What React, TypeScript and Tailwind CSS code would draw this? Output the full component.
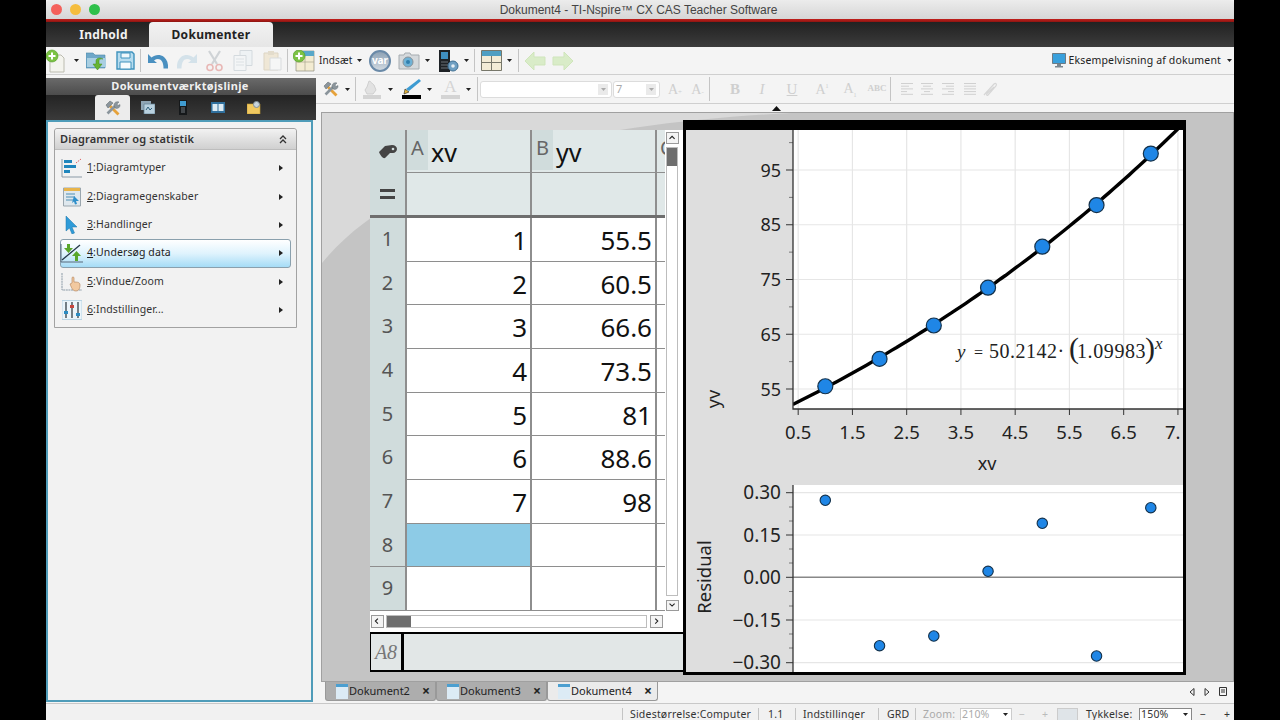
import type { ReactNode } from 'react'

const Arrow = ({ className = '' }: { className?: string }) => (
  <div className={`w-[5px] h-[3px] shrink-0 ${className}`}>
    <svg width="5" height="3" viewBox="0 0 5 3" className="block"><path d="M0 0h5L2.5 3z" fill="#222" /></svg>
  </div>
)
const Sep = ({ className = '' }: { className?: string }) => (
  <div className={`w-px self-stretch my-[2px] bg-[#c4c4c4] shrink-0 ${className}`} />
)

type IconProps = { className?: string }
const Plus = ({ x, y }: { x: number; y: number }) => (
  <g>
    <circle cx={x} cy={y} r="6" fill="#7cc243" stroke="#4f9a25" strokeWidth=".6" />
    <path d={`M${x - 3.5} ${y}h7M${x} ${y - 3.5}v7`} stroke="#fff" strokeWidth="2" />
  </g>
)

const NewDoc = ({ className }: IconProps) => (
  <svg width="20" height="24" viewBox="0 0 20 24" className={className}>
    <path d="M4 6h11l3 3v14H4z" fill="#f4f4ee" stroke="#bcbcb0" />
    <Plus x={6} y={7} />
  </svg>
)
const OpenIc = ({ className }: IconProps) => (
  <svg width="21" height="22" viewBox="0 0 21 22" className={className}>
    <path d="M0 3h7l2 2h10v13H0z" fill="#6fa8c9" stroke="#4b86a8" strokeWidth=".6" />
    <path d="M1 8h19v9H1z" fill="#a9cfe2" />
    <path d="M7 14h3v-3c0-3 4-4 7-2-3-.5-4 .5-4 2v3h3l-4.5 6z" fill="#67b432" stroke="#468b1b" strokeWidth=".5" />
  </svg>
)
const SaveIc = ({ className }: IconProps) => (
  <svg width="19" height="19" viewBox="0 0 19 19" className={className}>
    <path d="M1 1h15l2 2v15H1z" fill="#b7dcef" stroke="#3f92bd" strokeWidth="1.4" />
    <path d="M5 2h9v5H5z" fill="#eef7fb" stroke="#3f92bd" />
    <path d="M4 11h11v7H4z" fill="#f6fbfd" stroke="#3f92bd" />
  </svg>
)
const UndoIc = ({ className, color = '#4a90c0', flip = false }: IconProps & { color?: string; flip?: boolean }) => (
  <svg width="22" height="16" viewBox="0 0 22 16" className={className}>
    <g transform={flip ? 'translate(22 0) scale(-1 1)' : undefined}>
      <path d="M1 1v9h9L7 7.5c3-2 6-2 8 1 1 1.5 1.5 4 1.5 7H21c.5-5-1-9-4-11.5C13 1 8 1.5 4.5 4.5z" fill={color} />
    </g>
  </svg>
)
const CutIc = ({ className }: IconProps) => (
  <svg width="17" height="22" viewBox="0 0 17 22" className={className}>
    <path d="M3 1l8 13M14 1L6 14" stroke="#cfd3d6" strokeWidth="2.2" fill="none" />
    <circle cx="4" cy="17.5" r="3" fill="none" stroke="#e8b7b5" strokeWidth="1.6" />
    <circle cx="13" cy="17.5" r="3" fill="none" stroke="#e8b7b5" strokeWidth="1.6" />
  </svg>
)
const CopyIc = ({ className }: IconProps) => (
  <svg width="20" height="21" viewBox="0 0 20 21" className={className}>
    <path d="M7 .5h12v15H7z" fill="#eef2f4" stroke="#d4dade" />
    <path d="M1 5.5h12v15H1z" fill="#f3f5f6" stroke="#d4dade" />
    <path d="M3 9h8M3 12h8M3 15h8" stroke="#dce1e4" />
  </svg>
)
const PasteIc = ({ className }: IconProps) => (
  <svg width="19" height="21" viewBox="0 0 19 21" className={className}>
    <path d="M1 3h14v17H1z" fill="#efe7d6" stroke="#ddd5c4" />
    <path d="M5 1h6v4H5z" fill="#e3dccc" />
    <path d="M7 8h11v12H7z" fill="#f5f6f6" stroke="#d9dcde" />
  </svg>
)
const InsertIc = ({ className }: IconProps) => (
  <svg width="22" height="22" viewBox="0 0 22 22" className={className}>
    <path d="M3 1h18v20H3z" fill="#f3ecd2" stroke="#8d8d80" strokeWidth=".7" />
    <path d="M3 1h18v5H3z" fill="#58a8c9" />
    <path d="M3 12h18M12 6v15" stroke="#aaa690" strokeWidth=".7" />
    <Plus x={6} y={6} />
  </svg>
)
const VarIc = ({ className }: IconProps) => (
  <div className={`w-[22px] h-[22px] rounded-full border-2 border-[#6a8aa8] bg-linear-to-b from-[#8fa3b6] to-[#cfd8e0] flex items-center justify-center text-white text-[10px] font-bold ${className}`}>var</div>
)
const CameraIc = ({ className }: IconProps) => (
  <svg width="22" height="18" viewBox="0 0 22 18" className={className}>
    <path d="M1 3h5l1-2h5l1 2h8v14H1z" fill="#d5d9dc" stroke="#a6acb0" />
    <circle cx="10" cy="10" r="5" fill="#6fb2d6" stroke="#8a9298" />
    <circle cx="10" cy="10" r="2" fill="#2f7fae" />
  </svg>
)
const DeviceIc = ({ className }: IconProps) => (
  <svg width="21" height="22" viewBox="0 0 21 22" className={className}>
    <path d="M1 0h11v22H1z" fill="#1e2226" />
    <path d="M3 2h7v7H3z" fill="#3f8fc0" />
    <path d="M3 12h7M3 15h7M3 18h7" stroke="#6a7076" />
    <circle cx="15" cy="16" r="5" fill="#6f9fc2" stroke="#3f6f92" />
    <circle cx="15" cy="16" r="1.8" fill="#e5eef4" />
  </svg>
)
const LayoutIc = ({ className }: IconProps) => (
  <svg width="21" height="21" viewBox="0 0 21 21" className={className}>
    <path d="M.5.5h20v20H.5z" fill="#f3ecd6" stroke="#77776a" />
    <path d="M1 1h19v5H1z" fill="#4f9fc2" />
    <path d="M1 12.5h19M10.5 6v14" stroke="#77776a" />
  </svg>
)
const NavIc = ({ className, flip = false }: IconProps & { flip?: boolean }) => (
  <svg width="22" height="20" viewBox="0 0 22 20" className={className}>
    <path d={flip ? 'M12 1l9 9-9 9v-5H1V6h11z' : 'M10 1L1 10l9 9v-5h11V6H10z'} fill="#d9ecc8" stroke="#cfe5bb" />
  </svg>
)
const Monitor = ({ className }: IconProps) => (
  <svg width="14" height="15" viewBox="0 0 14 15" className={className}>
    <path d="M.5.5h13v10H.5z" fill="#39a0dc" stroke="#6b7b86" />
    <path d="M5 11h4v2h2v1.5H3V13h2z" fill="#7b868e" />
  </svg>
)
const Tools = ({ className }: IconProps) => (
  <svg width="16" height="16" viewBox="0 0 16 16" className={className}>
    <path d="M13.5 14.5L5 6" stroke="#e6a23a" strokeWidth="2.8" />
    <path d="M1 5l4-4 3 2-5 5z" fill="#8b959c" stroke="#596268" strokeWidth=".5" />
    <path d="M2.5 13.5L10 6" stroke="#8b959c" strokeWidth="2.6" />
    <path d="M9 5c0-2.5 2.5-4 5-3l-2 2 1 1.5 2-1c.5 2.5-2 5-5 3.5z" fill="#8b959c" stroke="#596268" strokeWidth=".4" />
  </svg>
)
const Fill = ({ className }: IconProps) => (
  <svg width="20" height="20" viewBox="0 0 20 20" className={className}>
    <path d="M7 2c2 0 3 3 5 4l2 5-3 4H5l-2-4 2-3z" fill="#e2e2e2" stroke="#cfcfcf" />
    <path d="M1 16h18v4H1z" fill="#d4d4d4" />
  </svg>
)
const Pen = ({ className }: IconProps) => (
  <svg width="19" height="20" viewBox="0 0 19 20" className={className}>
    <path d="M17 0l2 2L7 12l-3-2z" fill="#3d9bd2" />
    <path d="M3 10l4 3-5 2z" fill="#e3b53a" stroke="#222" strokeWidth=".6" />
    <path d="M0 16h19v4H0z" fill="#000" />
  </svg>
)
const TextA = ({ className }: IconProps) => (
  <div className={`w-[19px] h-[20px] flex flex-col items-center font-['Liberation_Serif',serif] text-[#d4d4d4] text-[17px] leading-[16px] ${className}`}>
    A<div className="w-full h-[4px] bg-[#d4d4d4]" />
  </div>
)
const Align = ({ kind, className }: IconProps & { kind: 'l' | 'c' | 'r' | 'j' }) => {
  const rows = [12, 8, 12, 6, 12]
  return (
    <svg width="16" height="14" viewBox="0 0 16 14" className={className}>
      {rows.map((w, i) => {
        const len = kind === 'j' ? 12 : w
        const x = kind === 'l' || kind === 'j' ? 2 : kind === 'r' ? 14 - len : 8 - len / 2
        return <path key={i} d={`M${x} ${1.5 + i * 2.7}h${len}`} stroke="#d0d0d0" />
      })}
    </svg>
  )
}
const Clip = ({ className }: IconProps) => (
  <svg width="16" height="15" viewBox="0 0 16 15" className={className}>
    <path d="M2 13L12 2c2-1.5 3 .5 2 2L6 13c-1 1-2 0-1-1.5L12 5" fill="none" stroke="#d6d6d6" strokeWidth="1.2" />
  </svg>
)
const DocTabIc = () => (
  <svg width="12" height="15" viewBox="0 0 12 15" className="shrink-0">
    <path d="M0 0h12v15H0z" fill="#dcebf5" />
    <path d="M0 0h12v3H0z" fill="#4c9fd0" />
  </svg>
)

const Pages = () => (
  <svg width="14" height="13" viewBox="0 0 14 13">
    <path d="M0 0h10v9H0z" fill="#8fa5b4" />
    <path d="M3 3h11v10H3z" fill="#b9d1df" stroke="#5f7f92" strokeWidth=".7" />
    <path d="M5 9l2-3 2 3 2-2" fill="none" stroke="#2f5f7a" />
  </svg>
)
const Handheld = () => (
  <svg width="8" height="15" viewBox="0 0 8 15">
    <path d="M0 0h8v15H0z" fill="#15181a" />
    <path d="M1 1h6v5H1z" fill="#3f9bd0" />
    <path d="M2 8h4M2 10h4M2 12h4" stroke="#70777c" />
  </svg>
)
const Book = () => (
  <svg width="14" height="11" viewBox="0 0 14 11">
    <path d="M0 0h14v11H0z" fill="#2f6f9c" />
    <path d="M1.5 2h5v7h-5zM7.5 2h5v7h-5z" fill="#dcebf3" />
  </svg>
)
const Folder = () => (
  <svg width="14" height="13" viewBox="0 0 14 13">
    <path d="M0 3h13v10H0z" fill="#f0c860" stroke="#c49a30" strokeWidth=".6" />
    <circle cx="9.5" cy="3.5" r="3" fill="#c8d4dc" stroke="#7f8e98" />
  </svg>
)

const MenuBars = () => (
  <svg width="22" height="20" viewBox="0 0 22 20">
    <path d="M1 1v18h20" fill="none" stroke="#8b9aa6" />
    <path d="M3 2h8v3H3zM3 7h12v3H3zM3 12h6v3H3z" fill="#1f86bd" />
    <path d="M15 5l5-4" stroke="#e06060" strokeDasharray="1.5 1" />
  </svg>
)
const MenuProps = () => (
  <svg width="18" height="20" viewBox="0 0 18 20">
    <path d="M.5 1h17v18H.5z" fill="#dfe8ee" stroke="#9aa6ae" />
    <path d="M1 1h16v3H1z" fill="#e8b44a" />
    <path d="M3 7h9M3 10h9M3 13h9" stroke="#4f8fb3" />
    <path d="M11 9l5 5h-3l1 3-2 .5-1-3-2 1.5z" fill="#2f8fca" />
  </svg>
)
const MenuCursor = () => (
  <svg width="13" height="18" viewBox="0 0 13 18">
    <path d="M1 0l11 11H7l2.5 6-2.5 1-2.5-6L1 15z" fill="#2f9bd8" stroke="#1d76a8" strokeWidth=".5" />
  </svg>
)
const MenuExplore = () => (
  <svg width="24" height="20" viewBox="0 0 24 20">
    <path d="M1 1v18h22" fill="none" stroke="#56687a" />
    <path d="M2 17L20 2" stroke="#26384a" strokeWidth="1.3" />
    <path d="M7 1v4H4l4.5 5L13 5h-3V1z" fill="#5aa72b" />
    <path d="M18 18v-5h3l-4.5-5-4.5 5h3v5z" fill="#5aa72b" />
  </svg>
)
const MenuWindow = () => (
  <svg width="22" height="20" viewBox="0 0 22 20">
    <path d="M1 1v17h20" fill="none" stroke="#8b9aa6" strokeDasharray="2 .6" />
    <path d="M9 12l2-1V6c0-1.5 2-1.5 2 0v4c3 0 6 0 6 3 0 3-1 6-4 6-3 0-4-2-6-7z" fill="#f2c9a0" stroke="#b08057" strokeWidth=".6" />
  </svg>
)
const MenuSettings = () => (
  <svg width="20" height="20" viewBox="0 0 20 20">
    <path d="M0 .5h20v19H0z" fill="#eaf4fa" stroke="#b9d4e4" />
    <path d="M4 2v16M10 2v16M16 2v16" stroke="#232f38" strokeWidth="1.2" />
    <path d="M2 11h4v3H2zM14 13h4v3h-4z" fill="#2a8bc2" />
    <path d="M8 5h4v3H8z" fill="#c6453d" />
  </svg>
)

const MENU: { num: string; label: string; icon: ReactNode }[] = [
  { num: '1', label: ':Diagramtyper', icon: <MenuBars /> },
  { num: '2', label: ':Diagramegenskaber', icon: <MenuProps /> },
  { num: '3', label: ':Handlinger', icon: <MenuCursor /> },
  { num: '4', label: ':Undersøg data', icon: <MenuExplore /> },
  { num: '5', label: ':Vindue/Zoom', icon: <MenuWindow /> },
  { num: '6', label: ':Indstillinger...', icon: <MenuSettings /> },
]

const Sidebar = () => (
  <div className="w-[270px] shrink-0 flex flex-col pt-[3px] bg-[#f4f4f4]">
    <div className="h-[17px] bg-linear-to-b from-[#6a6a6a] to-[#4c4c4c] text-[#f0f0f0] text-[11px] font-bold tracking-[.35px] flex items-center justify-center pr-[2px]">Dokumentværktøjslinje</div>
    <div className="h-[25px] bg-linear-to-b from-[#242424] to-[#3a3a3a] flex items-end pl-[49px]">
      <div className="w-[35px] h-[25px] bg-[#ececec] rounded-t-[3px] flex items-center justify-center"><Tools /></div>
      <div className="w-[36px] h-[25px] flex items-center justify-center"><Pages /></div>
      <div className="w-[34px] h-[25px] flex items-center justify-center"><Handheld /></div>
      <div className="w-[36px] h-[25px] flex items-center justify-center"><Book /></div>
      <div className="w-[36px] h-[25px] flex items-center justify-center"><Folder /></div>
    </div>
    <div className="h-[582px] w-[267px] border-2 border-[#4f9cb9] bg-[#f2f2f2] pt-[6px] pl-[6px]">
      <div className="w-[243px] h-[200px] border border-[#a2a2a2] rounded-t-[3px] flex flex-col">
        <div className="h-[21px] shrink-0 bg-linear-to-b from-[#f2f2f2] to-[#d0d0d0] border-b border-[#bdbdbd] rounded-t-[3px] flex items-center justify-between pl-[5px] pr-[9px]">
          <span className="text-[11px] font-semibold tracking-[.15px] text-[#333]">Diagrammer og statistik</span>
          <svg width="8" height="9" viewBox="0 0 8 9"><path d="M1 4l3-3 3 3M1 8l3-3 3 3" fill="none" stroke="#333" strokeWidth="1.3" /></svg>
        </div>
        <div className="pt-[4px] px-[5px] flex flex-col">
          {MENU.map(m => (
            <div
              key={m.num}
              className={m.num === '4'
                ? 'h-[28.4px] flex items-center rounded-[3px] border border-[#8aa0ad] bg-linear-to-b from-[#ffffff] via-[#dff3fd] to-[#a5dcf6] text-[#222]'
                : 'h-[28.4px] flex items-center border border-transparent text-[#333]'}
            >
              <div className="w-[25px] flex justify-center shrink-0 ml-[-2px]">{m.icon}</div>
              <span className="ml-[3px] text-[10.5px] tracking-[.1px]"><span className="underline">{m.num}</span>{m.label}</span>
              <svg width="4" height="6" viewBox="0 0 4 6" className="ml-auto mr-[7px]"><path d="M0 0l4 3-4 3z" fill="#222" /></svg>
            </div>
          ))}
        </div>
      </div>
    </div>
  </div>
)

const Toolbar = () => (
  <div className="h-[28px] bg-[#f4f4f4] border-b border-[#cfcfcf] flex items-center shrink-0">
    <NewDoc className="shrink-0" />
    <Arrow className="ml-[8px]" />
    <OpenIc className="ml-[7px] shrink-0" />
    <SaveIc className="ml-[9px] shrink-0" />
    <Sep className="ml-[5px]" />
    <UndoIc className="ml-[6px] shrink-0" />
    <UndoIc className="ml-[7px] shrink-0" color="#d4e2ea" flip />
    <CutIc className="ml-[8px] shrink-0" />
    <CopyIc className="ml-[10px] shrink-0" />
    <PasteIc className="ml-[10px] shrink-0" />
    <Sep className="ml-[5px]" />
    <InsertIc className="ml-[5px] shrink-0" />
    <span className="ml-[4px] w-[33px] text-[10px] tracking-[.1px] text-[#222]">Indsæt</span>
    <Arrow className="ml-[5px]" />
    <VarIc className="ml-[7px] shrink-0" />
    <CameraIc className="ml-[7px] shrink-0" />
    <Arrow className="ml-[5px]" />
    <DeviceIc className="ml-[8px] shrink-0" />
    <Arrow className="ml-[5px]" />
    <Sep className="ml-[5px]" />
    <LayoutIc className="ml-[6px] shrink-0" />
    <Arrow className="ml-[5px]" />
    <Sep className="ml-[6px]" />
    <NavIc className="ml-[5px] shrink-0" />
    <NavIc className="ml-[6px] shrink-0" flip />
    <Monitor className="ml-auto shrink-0" />
    <span className="ml-[3px] text-[10.5px] tracking-[.15px] text-[#222]">Eksempelvisning af dokument</span>
    <Arrow className="ml-[6px] mr-[2px]" />
  </div>
)

const FormatLabel = ({ w, ml, className = '', children }: { w: string; ml: string; className?: string; children: ReactNode }) => (
  <div className={`${w} ${ml} ${className} shrink-0 text-center font-['Liberation_Serif',serif] text-[#cfcfcf]`}>{children}</div>
)

const FormatBar = () => (
  <div className="h-[29px] bg-[#f4f4f4] border-b border-[#cfcfcf] flex items-center shrink-0">
    <Tools className="ml-[7px] shrink-0" />
    <Arrow className="ml-[6px]" />
    <Sep className="ml-[5px]" />
    <Fill className="ml-[6px] shrink-0" />
    <Arrow className="ml-[6px]" />
    <Pen className="ml-[9px] shrink-0" />
    <Arrow className="ml-[6px]" />
    <TextA className="ml-[9px] shrink-0" />
    <Arrow className="ml-[6px]" />
    <Sep className="ml-[6px]" />
    <div className="ml-[2px] w-[132px] h-[17px] bg-white border border-[#dcdcdc] rounded-[3px] flex items-center justify-end pr-[3px] shrink-0">
      <div className="w-[10px] h-[11px] bg-[#eaeaea] flex items-center justify-center"><svg width="5" height="3" viewBox="0 0 5 3"><path d="M0 0h5L2.5 3z" fill="#aaa" /></svg></div>
    </div>
    <div className="ml-[1px] w-[47px] h-[17px] bg-white border border-[#dcdcdc] rounded-[3px] flex items-center justify-between pl-[2px] pr-[3px] shrink-0">
      <span className="text-[11px] text-[#aaa]">7</span>
      <div className="w-[10px] h-[11px] bg-[#eaeaea] flex items-center justify-center"><svg width="5" height="3" viewBox="0 0 5 3"><path d="M0 0h5L2.5 3z" fill="#aaa" /></svg></div>
    </div>
    <FormatLabel w="w-[16px]" ml="ml-[7px]" className="text-[14px]">A<span className="text-[7px]">+</span></FormatLabel>
    <FormatLabel w="w-[15px]" ml="ml-[7px]" className="text-[14px]">A<span className="text-[7px]">-</span></FormatLabel>
    <Sep className="ml-[4px]" />
    <FormatLabel w="w-[20px]" ml="ml-[15px]" className="text-[15px] font-bold">B</FormatLabel>
    <FormatLabel w="w-[20px]" ml="ml-[7px]" className="text-[15px] italic">I</FormatLabel>
    <FormatLabel w="w-[20px]" ml="ml-[10px]" className="text-[15px] underline">U</FormatLabel>
    <FormatLabel w="w-[20px]" ml="ml-[10px]" className="text-[14px]">A<span className="text-[6px] align-super">1</span></FormatLabel>
    <FormatLabel w="w-[20px]" ml="ml-[8px]" className="text-[14px]">A<span className="text-[6px] align-sub">1</span></FormatLabel>
    <FormatLabel w="w-[24px]" ml="ml-[5px]" className="text-[9px] font-bold">ABC</FormatLabel>
    <Sep className="ml-[1px]" />
    <Align kind="l" className="ml-[8px] shrink-0" />
    <Align kind="c" className="ml-[4px] shrink-0" />
    <Align kind="r" className="ml-[5px] shrink-0" />
    <Align kind="j" className="ml-[6px] shrink-0" />
    <Clip className="ml-[4px] shrink-0" />
  </div>
)

const CELLS: [string, string, string][] = [
  ['1', '1', '55.5'],
  ['2', '2', '60.5'],
  ['3', '3', '66.6'],
  ['4', '4', '73.5'],
  ['5', '5', '81'],
  ['6', '6', '88.6'],
  ['7', '7', '98'],
  ['8', '', ''],
  ['9', '', ''],
]

const Chevron = ({ d }: { d: string }) => (
  <svg width="11" height="11" viewBox="0 0 13 13" className="block"><path d={d} fill="none" stroke="#222" strokeWidth="1.3" /></svg>
)

const Spreadsheet = () => (
  <div className="w-[313px] h-[542px] mt-[10px] shrink-0 flex flex-col bg-white">
    <div className="flex h-[481px] shrink-0">
      <div className="w-[295px] shrink-0 flex flex-col">
        <div className="grid grid-cols-[37px_125px_125px_8px] h-[43px] border-b border-[#8e8e8e] bg-[#e0e8e8]">
          <div className="bg-[#d0dcdc] border-r-2 border-[#8e8e8e] flex items-center justify-center">
            <svg width="20" height="16" viewBox="0 0 20 16"><path d="M1 8l6-6 7-1c3 0 5 2 5 4s-2 4-4 4l-3 0-5 5c-2 1-5-3-6-6z" fill="#444" /><circle cx="15" cy="5" r="1.3" fill="#d0dcdc" /></svg>
          </div>
          <div className="border-r-2 border-[#8e8e8e] flex">
            <div className="w-[21px] h-[40px] bg-[#d0dcdc] text-center text-[20px] leading-[36px] text-[#666]">A</div>
            <div className="ml-[3px] text-[25px] leading-[44px] text-[#111]">xv</div>
          </div>
          <div className="border-r-2 border-[#8e8e8e] flex">
            <div className="w-[21px] h-[40px] bg-[#d0dcdc] text-center text-[20px] leading-[36px] text-[#666]">B</div>
            <div className="ml-[3px] text-[25px] leading-[44px] text-[#111]">yv</div>
          </div>
          <div className="text-[20px] leading-[36px] text-[#666] overflow-hidden pl-[3px]">C</div>
        </div>
        <div className="grid grid-cols-[37px_125px_125px_8px] h-[45px] border-b-[3px] border-[#6e6e6e] bg-[#e0e8e8]">
          <div className="bg-[#d0dcdc] border-r-2 border-[#8e8e8e] flex items-center justify-center">
            <svg width="15" height="10" viewBox="0 0 15 10"><path d="M0 0h15v3H0zM0 7h15v3H0z" fill="#444" /></svg>
          </div>
          <div className="border-r-2 border-[#8e8e8e]" />
          <div className="border-r-2 border-[#8e8e8e]" />
          <div />
        </div>
        {CELLS.map(([row, a, b]) => (
          <div key={row} className="grid grid-cols-[37px_125px_125px_8px] h-[43.67px] border-b border-[#8e8e8e]">
            <div className="bg-[#d0dcdc] border-r-2 border-[#8e8e8e] text-center text-[20px] leading-[41px] text-[#555]">{row}</div>
            <div className={`border-r-2 border-[#8e8e8e] text-right pr-[3px] text-[26px] leading-[44px] text-[#111] ${row === '8' ? 'bg-[#8dcbe6]' : ''}`}>{a}</div>
            <div className="border-r-2 border-[#8e8e8e] text-right pr-[3px] text-[26px] leading-[44px] text-[#111]">{b}</div>
            <div />
          </div>
        ))}
      </div>
      <div className="w-[18px] shrink-0 pt-[2px] pl-[1px] flex flex-col">
        <div className="w-[13px] h-[12px] border border-[#9a9a9a] bg-[#f4f4f4]"><Chevron d="M3 7l3-3 3 3" /></div>
        <div className="w-[12px] h-[450px] mt-[3px] border border-[#bdbdbd] bg-white">
          <div className="h-[18px] bg-[#6e6e6e]" />
        </div>
        <div className="w-[13px] h-[11px] mt-[4px] border border-[#9a9a9a] bg-[#f4f4f4]"><Chevron d="M3 3l3 3 3-3" /></div>
      </div>
    </div>
    <div className="h-[21px] shrink-0 flex items-center pl-[1px] bg-white">
      <div className="w-[13px] h-[13px] border border-[#9a9a9a] bg-[#f4f4f4] shrink-0"><Chevron d="M7 3L4 6l3 3" /></div>
      <div className="w-[261px] h-[13px] ml-[2px] border border-[#bdbdbd] shrink-0"><div className="w-[24px] h-full bg-[#6e6e6e]" /></div>
      <div className="w-[13px] h-[13px] ml-[3px] border border-[#9a9a9a] bg-[#f4f4f4] shrink-0"><Chevron d="M5 3l3 3-3 3" /></div>
    </div>
    <div className="h-[40px] shrink-0 flex border-y-2 border-l border-black bg-[#e2e7e7]">
      <div className="w-[30px] flex items-center justify-center font-['Liberation_Serif',serif] italic text-[20px] text-[#777]">A8</div>
      <div className="w-[3px] bg-black" />
    </div>
  </div>
)

const xp = (v: number) => 825.3 + 54.25 * (v - 1)
const yp = (v: number) => 389 - (v - 55) * 5.475
const DATA = [55.5, 60.5, 66.6, 73.5, 81, 88.6, 98]
const RES = [500.3, 645.7, 636, 571.3, 523.3, 656, 507.7]
const fit = (x: number) => 50.2142 * Math.pow(1.09983, x)
const curve = Array.from({ length: 80 }, (_, i) => {
  const x = 0.4 + (i / 79) * 7.2
  return `${i ? 'L' : 'M'}${xp(x).toFixed(1)} ${yp(fit(x)).toFixed(1)}`
}).join(' ')

const XT = [0.5, 1.5, 2.5, 3.5, 4.5, 5.5, 6.5, 7.5]
const YT = [55, 65, 75, 85, 95]
const RT: [string, number][] = [['0.30', 492.7], ['0.15', 535], ['0.00', 577.3], ['−0.15', 620], ['−0.30', 662.7]]

// one drawing for both plots, in page coordinates
const Plots = () => (
  <div className="w-[503px] h-[555px] shrink-0 border-t-[10px] border-x-[3px] border-b-[3px] border-black bg-[#dedede]">
    <svg width="497" height="542" viewBox="686 130 497 542" className="block overflow-visible" fontFamily="'Noto Sans', sans-serif" fill="#222">
      <rect x="793" y="130" width="390" height="279" fill="#fff" />
      {XT.map(v => <path key={v} d={`M${xp(v)} 130V409`} stroke="#e6e6e6" strokeWidth="1.2" />)}
      {YT.map(v => <path key={v} d={`M793 ${yp(v)}H1183`} stroke="#e6e6e6" strokeWidth="1.2" />)}
      {YT.map(v => <path key={v} d={`M786 ${yp(v)}H793`} stroke="#333" />)}
      {[60, 70, 80, 90, 100].map(v => <path key={v} d={`M789 ${yp(v)}H793`} stroke="#777" />)}
      {XT.map(v => <path key={v} d={`M${xp(v)} 409V415`} stroke="#333" />)}
      <clipPath id="plotClip"><rect x="793" y="130" width="390" height="279" /></clipPath>
      <path d={curve} fill="none" stroke="#000" strokeWidth="3.4" clipPath="url(#plotClip)" />
      <path d="M793 130V409H1183" fill="none" stroke="#333" strokeWidth="1.3" />
      {DATA.map((v, i) => <circle key={i} cx={xp(i + 1)} cy={yp(v)} r="7.5" fill="#1f86e6" stroke="#14314a" strokeWidth="1.2" />)}
      {YT.map(v => <text key={v} x="781" y={yp(v) + 6.5} fontSize="18" textAnchor="end">{v}</text>)}
      {XT.slice(0, 7).map(v => <text key={v} x={xp(v)} y="439" fontSize="18.5" textAnchor="middle">{v.toFixed(1)}</text>)}
      <text x="1165" y="439" fontSize="18.5">7.</text>
      <text x="987" y="470" fontSize="18" textAnchor="middle">xv</text>
      <text transform="translate(720 399) rotate(-90)" fontSize="18" textAnchor="middle">yv</text>
      <g fontFamily="'Liberation Serif', serif" fill="#222">
        <text x="957" y="358" fontSize="19" fontStyle="italic">y</text>
        <text x="974" y="358" fontSize="16">=</text>
        <text x="989" y="358" fontSize="20" letterSpacing=".5">50.2142·</text>
        <text x="1069" y="358" fontSize="30" fontWeight="200">(</text>
        <text x="1077" y="358" fontSize="20" letterSpacing=".6">1.09983</text>
        <text x="1145" y="358" fontSize="30" fontWeight="200">)</text>
        <text x="1155" y="349" fontSize="17" fontStyle="italic">x</text>
      </g>

      <rect x="793" y="485" width="390" height="187" fill="#fff" />
      {RT.map(([l, y]) => <path key={l} d={`M793 ${y}H1183`} stroke={l === '0.00' ? '#888' : '#e6e6e6'} strokeWidth={l === '0.00' ? 1.6 : 1.2} />)}
      {RT.map(([l, y]) => <path key={l} d={`M786 ${y}H793`} stroke="#333" />)}
      {[507, 521, 549, 563, 591.5, 606, 634, 648].map(y => <path key={y} d={`M789 ${y}H793`} stroke="#777" />)}
      <path d="M793 485V672" stroke="#333" strokeWidth="1.3" />
      {RES.map((y, i) => <circle key={i} cx={xp(i + 1)} cy={y} r="5.2" fill="#1f86e6" stroke="#14314a" strokeWidth="1.1" />)}
      {RT.map(([l, y]) => <text key={l} x="781" y={y + 6.5} fontSize="19" textAnchor="end">{l}</text>)}
      <text transform="translate(711 577) rotate(-90)" fontSize="18.5" textAnchor="middle">Residual</text>
    </svg>
  </div>
)

const DocTab = ({ name, active = false }: { name: string; active?: boolean }) => (
  <div className={`w-[111px] h-[19px] shrink-0 border border-t-0 border-[#999] rounded-b-[3px] flex items-center pl-[10px] text-[11px] text-[#222] ${active ? 'bg-[#ebebeb]' : 'bg-[#adadad]'}`}>
    <DocTabIc />
    <span className="ml-[1px]">{name}</span>
    <span className="ml-auto mr-[5px] text-[14px] font-bold leading-none">×</span>
  </div>
)

const Status = () => (
  <div className="h-[17px] shrink-0 bg-[#f1f1f1] border-t border-[#c8c8c8] flex items-start pt-[4px] text-[10.5px] leading-[12px] tracking-[.2px] text-[#333]">
    <Sep className="ml-[576px] !my-0 h-[12px]" />
    <span className="ml-[7px] w-[120px] whitespace-nowrap">Sidestørrelse:Computer</span>
    <Sep className="ml-[8px] !my-0 h-[12px]" />
    <span className="ml-[9px] w-[18px]">1.1</span>
    <Sep className="ml-[9px] !my-0 h-[12px]" />
    <span className="ml-[7px] w-[59px]">Indstillinger</span>
    <Sep className="ml-[16px] !my-0 h-[12px]" />
    <span className="ml-[8px] w-[24px]">GRD</span>
    <Sep className="ml-[4px] !my-0 h-[12px]" />
    <span className="ml-[7px] w-[33px] text-[#aaa]">Zoom:</span>
    <div className="ml-[4px] w-[52px] h-[12px] border border-b-0 border-[#ccc] bg-white flex items-start justify-between pl-[1px] pr-[3px] leading-[11px] text-[#aaa] shrink-0">210%<Arrow className="mt-[4px]" /></div>
    <span className="ml-[7px] w-[10px] text-[#bbb]">−</span>
    <span className="ml-[13px] w-[10px] text-[#bbb]">+</span>
    <div className="ml-[5px] w-[21px] h-[12px] bg-[#dfe4e8] border border-b-0 border-[#ccc] shrink-0" />
    <span className="ml-[8px] w-[49px]">Tykkelse:</span>
    <div className="ml-[4px] w-[53px] h-[12px] border border-b-0 border-[#888] bg-white flex items-start justify-between pl-[1px] pr-[3px] leading-[11px] shrink-0">150%<Arrow className="mt-[4px]" /></div>
    <span className="ml-[8px] w-[10px]">−</span>
    <span className="ml-[14px] w-[10px]">+</span>
  </div>
)

export default function App() {
  return (
    <div className="w-[1280px] h-[720px] bg-black overflow-hidden px-[46px] font-['Noto_Sans',sans-serif]">
      <div className="w-[1188px] h-full flex flex-col bg-[#f4f4f4]">
        <div className="h-[19px] shrink-0 bg-linear-to-b from-[#ececec] to-[#d6d6d6] rounded-t-[4px] flex items-center relative">
          <div className="flex gap-[8px] ml-[5px]">
            <div className="w-[11px] h-[11px] rounded-full bg-[#f4605a]" />
            <div className="w-[11px] h-[11px] rounded-full bg-[#f5bd3e]" />
            <div className="w-[11px] h-[11px] rounded-full bg-[#2fc04b]" />
          </div>
          <div className="absolute inset-0 flex items-center justify-center pr-[3px] text-[12px] text-[#444] font-['Liberation_Sans',sans-serif]">Dokument4 - TI-Nspire™ CX CAS Teacher Software</div>
        </div>
        <div className="h-[3px] shrink-0 bg-linear-to-b from-[#c4201c] to-[#8c1512]" />
        <div className="h-[25px] shrink-0 bg-linear-to-b from-[#222] to-[#3c3c3c] flex items-end">
          <div className="w-[103px] h-[25px] pl-[12px] flex items-center justify-center text-[#f2f2f2] text-[12px] font-bold tracking-[.3px]">Indhold</div>
          <div className="w-[124px] h-[25px] bg-linear-to-b from-[#f2f2f2] to-[#e6e6e6] rounded-t-[4px] flex items-center justify-center text-[#222] text-[12px] font-bold tracking-[.3px]">Dokumenter</div>
        </div>
        <Toolbar />
        <div className="flex flex-1 min-h-0">
          <Sidebar />
          <div className="flex-1 min-w-0 flex flex-col bg-[#f4f4f4]">
            <FormatBar />
            <div className="h-[8px] shrink-0 flex">
              <svg width="9" height="5" viewBox="0 0 9 5" className="ml-[456px] mt-[2px]"><path d="M0 5L4.5 0 9 5z" fill="#111" /></svg>
            </div>
            <div className="h-[570px] shrink-0 ml-[5px] w-[913px] border border-[#a0a0a0] bg-[#c4c4c4] relative overflow-hidden">
              <svg width="911" height="568" viewBox="0 0 911 568" className="absolute inset-0">
                <path d="M0 0H470C300 8 90 40 0 150z" fill="#d9d9d9" />
              </svg>
              <div className="relative flex pl-[48px] pt-[7px]">
                <Spreadsheet />
                <Plots />
              </div>
            </div>
            <div className="h-[21px] shrink-0 flex items-start pl-[9px]">
              <DocTab name="Dokument2" />
              <DocTab name="Dokument3" />
              <DocTab name="Dokument4" active />
              <div className="ml-auto mr-[7px] mt-[5px] flex items-center gap-[9px]">
                <svg width="6" height="8" viewBox="0 0 6 8"><path d="M5 .5L1 4l4 3.5z" fill="none" stroke="#333" /></svg>
                <svg width="6" height="8" viewBox="0 0 6 8"><path d="M1 .5L5 4 1 7.5z" fill="none" stroke="#333" /></svg>
                <svg width="8" height="9" viewBox="0 0 8 9"><path d="M.5.5h7v8h-7zM2 3h4M2 5h4" fill="none" stroke="#333" /></svg>
              </div>
            </div>
          </div>
        </div>
        <Status />
      </div>
    </div>
  )
}
